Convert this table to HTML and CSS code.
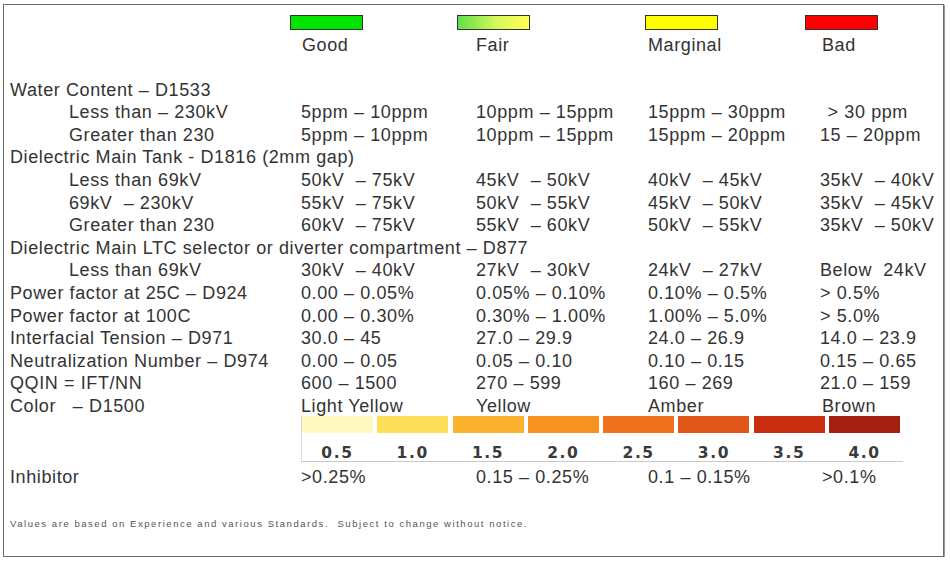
FILE: index.html
```html
<!DOCTYPE html>
<html lang="en">
<head>
<meta charset="utf-8">
<title>Oil Test Limits</title>
<link rel="stylesheet" href="styles.css">
</head>
<body>
<div class="frame">
  <div class="legend">
    <div class="leg leg-good"><span class="swatch sw-good"></span><span class="leg-label">Good</span></div>
    <div class="leg leg-fair"><span class="swatch sw-fair"></span><span class="leg-label">Fair</span></div>
    <div class="leg leg-marg"><span class="swatch sw-marg"></span><span class="leg-label">Marginal</span></div>
    <div class="leg leg-bad"><span class="swatch sw-bad"></span><span class="leg-label">Bad</span></div>
  </div>

  <div class="table">
    <div class="full">Water Content – D1533</div>
    <div class="ind">Less than – 230kV</div><div>5ppm – 10ppm</div><div>10ppm – 15ppm</div><div>15ppm – 30ppm</div><div class="c4">&nbsp;&gt; 30 ppm</div>
    <div class="ind">Greater than 230</div><div>5ppm – 10ppm</div><div>10ppm – 15ppm</div><div>15ppm – 20ppm</div><div>15 – 20ppm</div>
    <div class="full">Dielectric Main Tank - D1816 (2mm gap)</div>
    <div class="ind">Less than 69kV</div><div>50kV  – 75kV</div><div>45kV  – 50kV</div><div>40kV  – 45kV</div><div>35kV  – 40kV</div>
    <div class="ind">69kV  – 230kV</div><div>55kV  – 75kV</div><div>50kV  – 55kV</div><div>45kV  – 50kV</div><div>35kV  – 45kV</div>
    <div class="ind">Greater than 230</div><div>60kV  – 75kV</div><div>55kV  – 60kV</div><div>50kV  – 55kV</div><div>35kV  – 50kV</div>
    <div class="full">Dielectric Main LTC selector or diverter compartment – D877</div>
    <div class="ind">Less than 69kV</div><div>30kV  – 40kV</div><div>27kV  – 30kV</div><div>24kV  – 27kV</div><div>Below  24kV</div>
    <div>Power factor at 25C – D924</div><div>0.00 – 0.05%</div><div>0.05% – 0.10%</div><div>0.10% – 0.5%</div><div>&gt; 0.5%</div>
    <div>Power factor at 100C</div><div>0.00 – 0.30%</div><div>0.30% – 1.00%</div><div>1.00% – 5.0%</div><div>&gt; 5.0%</div>
    <div>Interfacial Tension – D971</div><div>30.0 – 45</div><div>27.0 – 29.9</div><div>24.0 – 26.9</div><div>14.0 – 23.9</div>
    <div>Neutralization Number – D974</div><div>0.00 – 0.05</div><div>0.05 – 0.10</div><div>0.10 – 0.15</div><div>0.15 – 0.65</div>
    <div>QQIN = IFT/NN</div><div>600 – 1500</div><div>270 – 599</div><div>160 – 269</div><div>21.0 – 159</div>
    <div>Color &nbsp;&nbsp;– D1500</div><div>Light Yellow</div><div>Yellow</div><div>Amber</div><div class="c4">Brown</div>
  </div>

  <div class="scale-wrap">
    <div class="scale">
      <div class="bars">
        <span class="bar b1"></span><span class="bar b2"></span><span class="bar b3"></span><span class="bar b4"></span>
        <span class="bar b5"></span><span class="bar b6"></span><span class="bar b7"></span><span class="bar b8"></span>
      </div>
      <div class="nums">
        <span>0.5</span><span>1.0</span><span>1.5</span><span>2.0</span><span>2.5</span><span>3.0</span><span>3.5</span><span>4.0</span>
      </div>
    </div>
  </div>

  <div class="table inhib">
    <div>Inhibitor</div><div>&gt;0.25%</div><div>0.15 – 0.25%</div><div>0.1 – 0.15%</div><div class="c4">&gt;0.1%</div>
  </div>

  <p class="note">Values are based on Experience and various Standards.&nbsp; Subject to change without notice.</p>
</div>
</body>
</html>
```

FILE: styles.css
```css
html, body {
  margin: 0;
  padding: 0;
  background: #ffffff;
}

.frame {
  box-sizing: border-box;
  margin: 4px 0 0 3px;
  width: 941px;
  height: 553px;
  border: 1px solid #6b6b6b;
  box-shadow: 1px 1px 0 #9a9a9a;
  padding: 10px 0 0 6px;
  font-family: "Liberation Sans", Arial, sans-serif;
  color: #333333;
  font-size: 18px;
  letter-spacing: 0.6px;
}

.legend {
  display: grid;
  grid-template-columns: 280px 167px 188px 160px 1fr;
  height: 45px;
}

.leg {
  display: flex;
  flex-direction: column;
  align-items: flex-start;
}

.leg-good { grid-column: 2; }
.leg-fair { grid-column: 3; }
.leg-marg { grid-column: 4; }
.leg-bad  { grid-column: 5; }

.swatch {
  display: block;
  box-sizing: border-box;
  width: 73px;
  height: 15px;
  border: 1px solid #333;
}

.sw-good { background: #00e400; }
.sw-fair { background: linear-gradient(to right, #5ee04a, #d8f85a 55%, #ffff55); }
.sw-marg { background: #ffff00; }
.sw-bad  { background: #ff0000; }

.leg-label {
  display: block;
  margin-top: 4px;
  line-height: 22px;
}

.leg-good .leg-label { padding-left: 12px; }
.leg-fair .leg-label { padding-left: 19px; }
.leg-marg .leg-label { padding-left: 3px; }
.leg-bad  .leg-label { padding-left: 17px; }

.table {
  display: grid;
  grid-template-columns: 291px 175px 172px 172px 1fr;
  line-height: 22.6px;
  margin-top: 18.7px;
  white-space: pre;
}

.full {
  grid-column: 1 / -1;
}

.ind {
  padding-left: 59px;
}

.c4 {
  padding-left: 2px;
}

.scale-wrap {
  padding-left: 291px;
  margin-top: -3px;
}

.scale {
  box-sizing: border-box;
  width: 602px;
  border-left: 1px solid #dcdcdc;
  border-bottom: 1px solid #c8c8c8;
  padding-top: 1px;
}

.bars {
  display: grid;
  grid-template-columns: repeat(8, 1fr);
  column-gap: 4.4px;
  width: 598px;
}

.bar {
  display: block;
  height: 17px;
}

.b1 { background: #fff8bf; }
.b2 { background: #fde05a; }
.b3 { background: #fbb22e; }
.b4 { background: #f7911f; }
.b5 { background: #ef731f; }
.b6 { background: #e0571a; }
.b7 { background: #c92d0f; }
.b8 { background: #a31f10; }

.nums {
  display: grid;
  grid-template-columns: repeat(8, 1fr);
  column-gap: 4.4px;
  width: 598px;
  margin-top: 12px;
  line-height: 16px;
  font-family: "DejaVu Sans", Verdana, sans-serif;
  font-weight: bold;
  font-size: 15.5px;
  letter-spacing: 1.6px;
  color: #3a3a3a;
  text-align: center;
}

.inhib {
  margin-top: 4px;
}

.note {
  margin: 30px 0 0 0;
  font-size: 9.5px;
  line-height: 12px;
  letter-spacing: 1.55px;
  color: #555;
  white-space: pre;
}
```
